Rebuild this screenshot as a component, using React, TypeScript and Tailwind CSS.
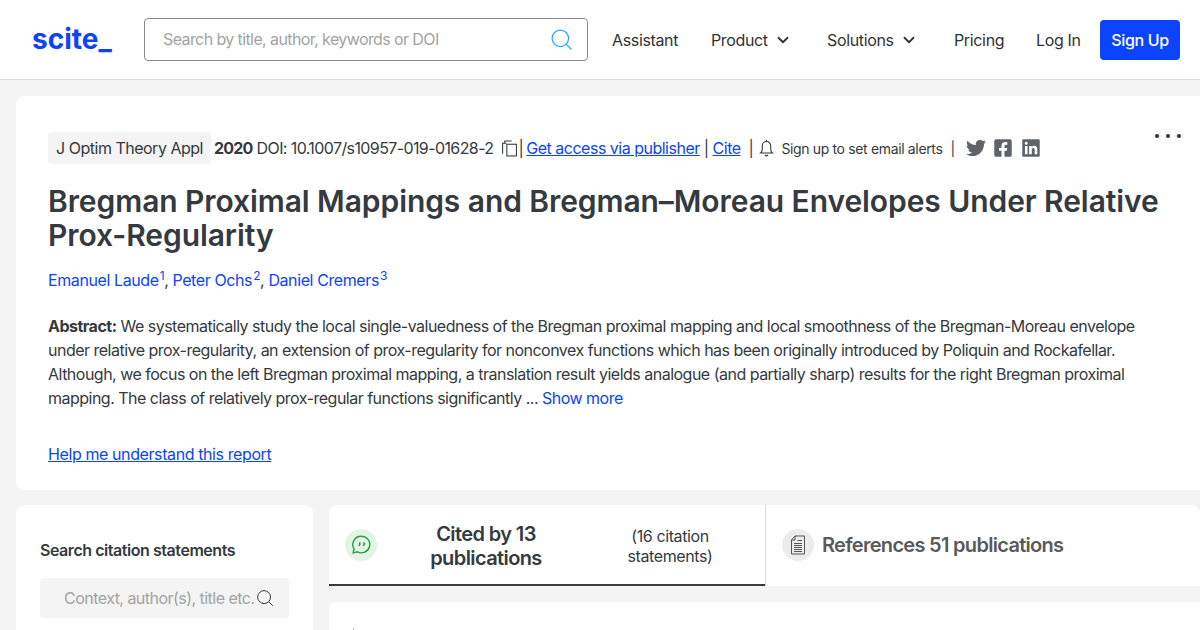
import { FaFacebookSquare, FaLinkedin, FaTwitter } from "react-icons/fa";
import { ChevronDown } from "lucide-react";

const fontStack = "font-['Inter','Liberation_Sans',sans-serif]";

function SearchIcon({ className }: { className: string }) {
  return (
    <svg viewBox="0 0 24 24" fill="none" stroke="currentColor" strokeWidth="1.3" className={className}>
      <circle cx="10.8" cy="10.8" r="8.6" />
      <path d="M17 17l5.4 5.4" />
    </svg>
  );
}

function Header() {
  return (
    <header className="flex h-20 shrink-0 items-center border-b border-[#dddddd] bg-white">
      <div className="ml-[32px] w-[112px] pb-[1px] text-[28px] font-bold leading-none text-[#0b44ff]">scite_</div>
      <div className="flex h-[43px] w-[444px] items-center justify-between rounded-[4px] border border-[#8a8a8a] pl-[18px] pr-[14px]">
        <span className="pb-[1px] text-[16px] tracking-[-0.6px] text-[#a3a3a3]">Search by title, author, keywords or DOI</span>
        <SearchIcon className="h-[23px] w-[23px] text-[#2aa8f5]" />
      </div>
      <nav className="ml-[24px] flex items-center text-[16px] tracking-[-0.35px] text-[#2f3337]">
        <span className="w-[99px]">Assistant</span>
        <span className="flex w-[116px] items-center">
          Product
          <ChevronDown className="ml-[6px] h-[18px] w-[18px]" strokeWidth={2.4} />
        </span>
        <span className="flex w-[127px] items-center">
          Solutions
          <ChevronDown className="ml-[6px] h-[18px] w-[18px]" strokeWidth={2.4} />
        </span>
        <span className="w-[82px]">Pricing</span>
        <span className="w-[64px]">Log In</span>
        <span className="flex h-[40px] w-[80px] items-center justify-center rounded-[4px] bg-[#0b44ff] font-medium text-white">Sign Up</span>
      </nav>
    </header>
  );
}

function PaperCard() {
  return (
    <section className="relative ml-[16px] mt-[16px] h-[394px] shrink-0 rounded-l-[8px] bg-white pl-[32px] pt-[36px] text-[#343a3f]">
      <div className="flex h-[32px] items-center whitespace-nowrap text-[16px] tracking-[-0.5px]">
        <span className="flex h-[32px] w-[163px] items-center justify-center rounded-[4px] bg-[#f4f4f4]">J Optim Theory Appl</span>
        <span className="ml-[3px] font-bold tracking-[-0.8px]">2020</span>
        <span className="ml-[4px] tracking-[-0.6px]">DOI: 10.1007/s10957-019-01628-2</span>
        <svg viewBox="0 0 16 16" fill="none" stroke="currentColor" strokeWidth="1" className="ml-[7px] h-[17px] w-[17px]">
          <path d="M5 3H1.500v10M3.500 3V1h6.500" />
          <rect x="5.500" y="4" width="9" height="11" />
        </svg>
        <span className="ml-[1px]">|</span>
        <a className="ml-[3px] text-[#0b44ff] underline">Get access via publisher</a>
        <span className="ml-[4px]">|</span>
        <a className="ml-[4px] text-[#0b44ff] underline">Cite</a>
        <span className="ml-[8px]">|</span>
        <svg viewBox="0 0 16 20" fill="none" stroke="currentColor" strokeWidth="1.2" className="ml-[6px] h-[18px] w-[15px]">
          <path d="M1.500 15.500c1.300-1 1.800-2.500 1.800-4.500V7.500a4.700 4.700 0 0 1 9.400 0V11c0 2 .5 3.500 1.800 4.500z" />
          <path d="M6.300 17.500a1.800 1.800 0 0 0 3.400 0M8 2.800V1" />
        </svg>
        <span className="ml-[7px] text-[14px] tracking-[-0.35px]">Sign up to set email alerts</span>
        <span className="ml-[8px] text-[14px]">|</span>
        <FaTwitter className="ml-[11px] h-[20px] w-[20px] text-[#5f6368]" />
        <FaFacebookSquare className="ml-[7px] h-[20px] w-[20px] text-[#5f6368]" />
        <FaLinkedin className="ml-[8px] h-[20px] w-[20px] text-[#5f6368]" />
      </div>
      <div className="absolute right-[19px] top-[38px] flex gap-[7px]">
        <span className="h-[4px] w-[4px] rounded-full bg-[#2f3337]" />
        <span className="h-[4px] w-[4px] rounded-full bg-[#2f3337]" />
        <span className="h-[4px] w-[4px] rounded-full bg-[#2f3337]" />
      </div>
      <h1 className="mt-[20px] w-[1130px] text-[30px] font-semibold leading-[34px] tracking-[-0.08px]">
        Bregman Proximal Mappings and Bregman–Moreau Envelopes Under Relative Prox-Regularity
      </h1>
      <div className="mt-[16px] flex h-[24px] items-center text-[16px] tracking-[-0.4px] text-[#0b44ff]">
        <span>Emanuel Laude<sup className="ml-[1px] text-[12px]">1</sup></span>
        <span className="text-[#343a3f]">,&nbsp;</span>
        <span>Peter Ochs<sup className="ml-[1px] text-[12px]">2</sup></span>
        <span className="text-[#343a3f]">,&nbsp;</span>
        <span>Daniel Cremers<sup className="ml-[1px] text-[12px]">3</sup></span>
      </div>
      <p className="mt-[22px] w-[1110px] text-[16px] leading-[24px] tracking-[-0.51px]">
        <b>Abstract:</b> We systematically study the local single-valuedness of the Bregman proximal mapping and local smoothness of the Bregman-Moreau envelope under relative prox-regularity, an extension of prox-regularity for nonconvex functions which has been originally introduced by Poliquin and Rockafellar. Although, we focus on the left Bregman proximal mapping, a translation result yields analogue (and partially sharp) results for the right Bregman proximal mapping. The class of relatively prox-regular functions significantly ... <span className="text-[#0b44ff]">Show more</span>
      </p>
      <a className="mt-[32px] block w-fit text-[16px] leading-[24px] tracking-[-0.4px] text-[#0b44ff] underline">Help me understand this report</a>
    </section>
  );
}

function Sidebar() {
  return (
    <aside className="h-[200px] w-[297px] shrink-0 rounded-[8px] bg-white px-[24px] pt-[35px]">
      <h2 className="text-[16px] font-semibold leading-[20px] tracking-[-0.45px] text-[#343a3f]">Search citation statements</h2>
      <div className="mt-[18px] flex h-[40px] w-[249px] items-center rounded-[4px] bg-[#f4f4f4] pl-[24px]">
        <span className="whitespace-nowrap text-[16px] tracking-[-0.53px] text-[#a3a3a3]">Context, author(s), title etc.</span>
        <SearchIcon className="ml-[2px] h-[18px] w-[18px] shrink-0 text-[#2f3337]" />
      </div>
    </aside>
  );
}

function CitationTabs() {
  return (
    <div className="flex h-[81px] rounded-t-[8px] bg-white text-[#343a3f]">
      <div className="flex w-[436px] items-center border-b-2 border-[#373a3e] pl-[16px] pt-[2px]">
        <span className="mb-[2px] flex h-[32px] w-[32px] shrink-0 items-center justify-center rounded-full bg-[#e2f5e4]">
          <svg viewBox="0 0 24 24" fill="none" stroke="#2a9d4a" strokeWidth="1.6" className="h-[21px] w-[21px]">
            <path d="M12 2.500a9.500 9.500 0 1 1-4.500 17.900L2.500 21.500l1-4.500A9.500 9.500 0 0 1 12 2.500z" />
            <path d="M10 9.500v2.500l-1 1.500M15 9.500v2.500l-1 1.500" strokeWidth="1.800" />
          </svg>
        </span>
        <span className="w-[218px] px-[30px] text-center text-[20px] font-semibold leading-[24px] tracking-[-0.6px]">Cited by 13 publications</span>
        <span className="ml-[20px] w-[110px] text-center text-[16px] leading-[20px] tracking-[-0.4px]">(16 citation statements)</span>
      </div>
      <div className="flex flex-1 items-center border-l border-[#dddddd] pb-[2px] pl-[16px]">
        <span className="flex h-[32px] w-[32px] shrink-0 items-center justify-center rounded-full bg-[#ececec]">
          <svg viewBox="0 0 16 20" fill="none" stroke="#555555" strokeWidth="1" className="h-[20px] w-[16px]">
            <path d="M5 1h9.500v18h-13V5z M5 1v4H1.500" />
            <path d="M7.500 5.500h4.500M4 8.500h8M4 10.500h8M4 12.500h8M4 14.500h8M4 16.500h8" />
          </svg>
        </span>
        <span className="ml-[8px] text-[20px] font-semibold tracking-[-0.7px] text-[#5a5a5a]">References 51 publications</span>
      </div>
    </div>
  );
}

export default function App() {
  return (
    <div className={`flex h-[630px] w-[1200px] flex-col overflow-hidden bg-[#f4f4f4] ${fontStack}`}>
      <Header />
      <PaperCard />
      <div className="ml-[16px] mt-[15px] flex gap-[16px]">
        <Sidebar />
        <div className="flex-1">
          <CitationTabs />
          <div className="mt-[16px] h-[100px] rounded-l-[8px] bg-white pl-[24px] pt-[26px]">
            <div className="h-[10px] w-px bg-[#bbbbbb]" />
          </div>
        </div>
      </div>
    </div>
  );
}
